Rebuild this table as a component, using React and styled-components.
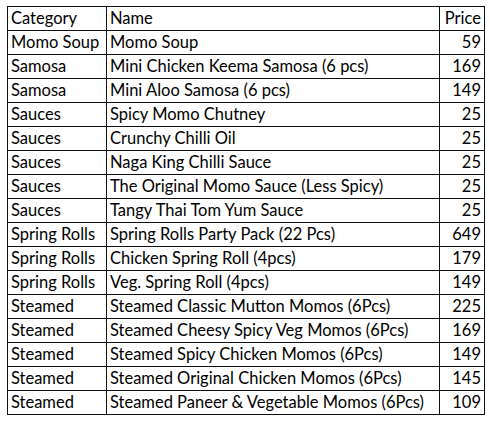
import React from 'react';
import styled, { createGlobalStyle } from 'styled-components';

const GlobalStyle = createGlobalStyle`
  html, body {
    margin: 0;
    padding: 0;
    background: #ffffff;
  }
`;

const Page = styled.div`
  padding: 6px 0 0 7px;
`;

const Sheet = styled.table`
  border-collapse: collapse;
  table-layout: fixed;
  width: 477px;
  font-family: Lato, "Liberation Sans", sans-serif;
  font-size: 16.5px;
  color: #000;
`;

const Cell = styled.td`
  border: 1px solid #111;
  height: 23px;
  padding: 0 3px 0 3px;
  line-height: 23px;
  white-space: nowrap;
  overflow: hidden;
  text-align: ${(p) => (p.$num ? 'right' : 'left')};
`;

const rows = [
  ['Momo Soup', 'Momo Soup', 59],
  ['Samosa', 'Mini Chicken Keema Samosa (6 pcs)', 169],
  ['Samosa', 'Mini Aloo Samosa (6 pcs)', 149],
  ['Sauces', 'Spicy Momo Chutney', 25],
  ['Sauces', 'Crunchy Chilli Oil', 25],
  ['Sauces', 'Naga King Chilli Sauce', 25],
  ['Sauces', 'The Original Momo Sauce (Less Spicy)', 25],
  ['Sauces', 'Tangy Thai Tom Yum Sauce', 25],
  ['Spring Rolls', 'Spring Rolls Party Pack (22 Pcs)', 649],
  ['Spring Rolls', 'Chicken Spring Roll (4pcs)', 179],
  ['Spring Rolls', 'Veg. Spring Roll (4pcs)', 149],
  ['Steamed', 'Steamed Classic Mutton Momos (6Pcs)', 225],
  ['Steamed', 'Steamed Cheesy Spicy Veg Momos (6Pcs)', 169],
  ['Steamed', 'Steamed Spicy Chicken Momos (6Pcs)', 149],
  ['Steamed', 'Steamed Original Chicken Momos (6Pcs)', 145],
  ['Steamed', 'Steamed Paneer & Vegetable Momos (6Pcs)', 109],
];

export default function App() {
  return (
    <Page>
      <GlobalStyle />
      <Sheet>
        <colgroup>
          <col style={{ width: '99px' }} />
          <col style={{ width: '333px' }} />
          <col style={{ width: '45px' }} />
        </colgroup>
        <tbody>
          <tr>
            <Cell>Category</Cell>
            <Cell>Name</Cell>
            <Cell $num>Price</Cell>
          </tr>
          {rows.map(([cat, name, price], i) => (
            <tr key={i}>
              <Cell>{cat}</Cell>
              <Cell>{name}</Cell>
              <Cell $num>{price}</Cell>
            </tr>
          ))}
        </tbody>
      </Sheet>
    </Page>
  );
}
